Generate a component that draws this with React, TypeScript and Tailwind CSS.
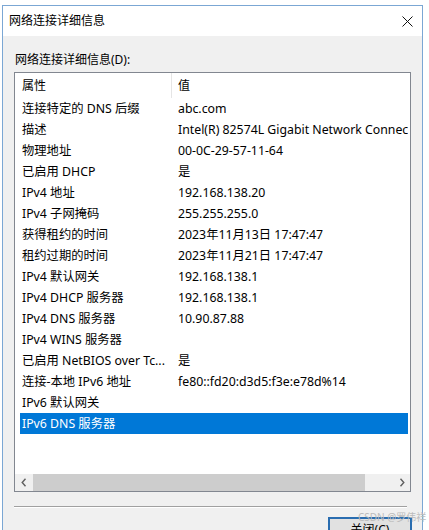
import React from "react";

const rows: [string, string][] = [
  ["连接特定的 DNS 后缀", "abc.com"],
  ["描述", "Intel(R) 82574L Gigabit Network Connection"],
  ["物理地址", "00-0C-29-57-11-64"],
  ["已启用 DHCP", "是"],
  ["IPv4 地址", "192.168.138.20"],
  ["IPv4 子网掩码", "255.255.255.0"],
  ["获得租约的时间", "2023年11月13日 17:47:47"],
  ["租约过期的时间", "2023年11月21日 17:47:47"],
  ["IPv4 默认网关", "192.168.138.1"],
  ["IPv4 DHCP 服务器", "192.168.138.1"],
  ["IPv4 DNS 服务器", "10.90.87.88"],
  ["IPv4 WINS 服务器", ""],
  ["已启用 NetBIOS over Tc...", "是"],
  ["连接-本地 IPv6 地址", "fe80::fd20:d3d5:f3e:e78d%14"],
  ["IPv6 默认网关", ""],
  ["IPv6 DNS 服务器", ""],
];

export default function App() {
  return (
    <div
      className="relative w-[429px] h-[530px] overflow-hidden bg-white text-[12px] text-black"
      style={{ fontFamily: '"Noto Sans","Noto Sans CJK SC",sans-serif' }}
    >
      <div className="ml-[2px] mt-[5px] w-[421px] h-[540px] border border-[#7ba7d4] bg-[#f0f0f0] flex flex-col">
        {/* title bar */}
        <div className="h-[30px] bg-white flex items-center justify-between pl-[6px] pr-[9px] shrink-0">
          <span className="leading-[16px]">网络连接详细信息</span>
          <svg width="11" height="11" viewBox="0 0 11 11" className="shrink-0">
            <path d="M0.5 0.5 L10.5 10.5 M10.5 0.5 L0.5 10.5" stroke="#111" strokeWidth="1" />
          </svg>
        </div>
        {/* body */}
        <div className="flex flex-col pl-[11px] pr-[10px]">
          <div className="mt-[16px] h-[16px] leading-[16px] pl-[1px]">网络连接详细信息(D):</div>
          <div className="mt-[4px] w-[397px] h-[420px] border border-[#828790] bg-white flex flex-col overflow-hidden">
            {/* header */}
            <div className="h-[25px] flex shrink-0">
              <div className="w-[156px] pl-[7px] flex items-center leading-[16px]">属性</div>
              <div className="w-px bg-[#e5e5e5]" />
              <div className="flex-1 pl-[6px] flex items-center leading-[16px]">值</div>
            </div>
            {/* rows */}
            <div className="flex flex-col text-[12.3px]">
              {rows.map(([k, v], i) => {
                const sel = i === rows.length - 1;
                return (
                  <div
                    key={i}
                    className={
                      "ml-[5px] w-[388px] h-[21px] flex items-center overflow-hidden whitespace-nowrap leading-[16px] " +
                      (sel ? "bg-[#0078d7] text-white" : "")
                    }
                  >
                    <div className="w-[158px] pl-[2px] shrink-0">{k}</div>
                    <div className="shrink-0">{v}</div>
                  </div>
                );
              })}
            </div>
            <div className="flex-1" />
            {/* horizontal scrollbar */}
            <div className="h-[17px] flex bg-[#f0f0f0] shrink-0">
              <div className="w-[17px] flex items-center justify-center">
                <svg width="6" height="9" viewBox="0 0 6 9">
                  <path d="M4.5 0.8 L1.2 4.5 L4.5 8.2" fill="none" stroke="#606060" strokeWidth="1.4" />
                </svg>
              </div>
              <div className="flex-1 flex items-stretch">
                <div className="ml-[1px] w-[332px] bg-[#cdcdcd]" />
              </div>
              <div className="w-[17px] flex items-center justify-center">
                <svg width="6" height="9" viewBox="0 0 6 9">
                  <path d="M1.5 0.8 L4.8 4.5 L1.5 8.2" fill="none" stroke="#606060" strokeWidth="1.4" />
                </svg>
              </div>
            </div>
          </div>
          {/* separator */}
          <div className="mt-[14px] w-[393px] h-[2px] border-t border-[#a0a0a0] border-b border-b-white" />
          {/* button */}
          <div className="mt-[9px] flex justify-end">
            <div className="w-[84px] h-[26px] border-2 border-[#2a6db0] bg-[#e1e1e1] flex items-center justify-center leading-[16px]">
              关闭(C)
            </div>
          </div>
        </div>
      </div>
      {/* watermark */}
      <div className="absolute left-[358px] top-[511px] text-[10px] leading-[12px] text-[#bcbcbc] whitespace-nowrap">
        CSDN @罗伟祥
      </div>
    </div>
  );
}
